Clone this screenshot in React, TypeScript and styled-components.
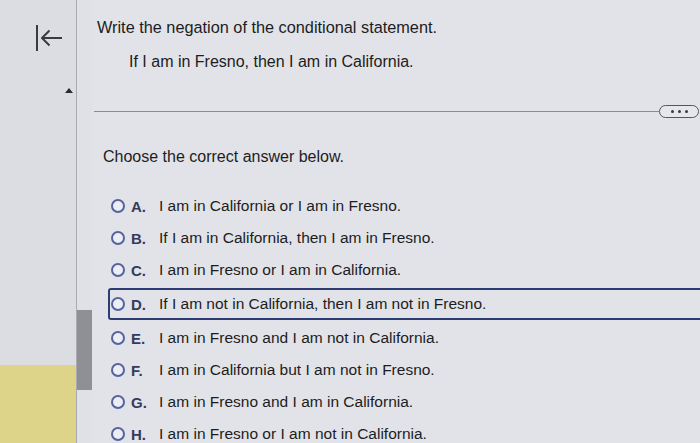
import styled, { createGlobalStyle } from "styled-components";

const GlobalStyle = createGlobalStyle`
  html, body {
    margin: 0;
    padding: 0;
    background: #e2e3e8;
    font-family: "Liberation Sans", Arial, sans-serif;
    color: #1c1d22;
  }
`;

const options = [
  { key: "A", text: "I am in California or I am in Fresno." },
  { key: "B", text: "If I am in California, then I am in Fresno." },
  { key: "C", text: "I am in Fresno or I am in California." },
  { key: "D", text: "If I am not in California, then I am not in Fresno." },
  { key: "E", text: "I am in Fresno and I am not in California." },
  { key: "F", text: "I am in California but I am not in Fresno." },
  { key: "G", text: "I am in Fresno and I am in California." },
  { key: "H", text: "I am in Fresno or I am not in California." },
];

const BackIcon = () => (
  <svg width="30" height="30" viewBox="0 0 30 30" fill="none">
    <path d="M2 1 V27" stroke="#3a3b40" strokeWidth="2" />
    <path d="M27 14 H7 M14.5 6.5 L7 14 L14.5 21.5" stroke="#3a3b40" strokeWidth="2" strokeLinejoin="round" />
  </svg>
);

export default function App() {
  return (
    <>
      <GlobalStyle />
      <Page>
        <Sidebar>
          <IconBox>
            <BackIcon />
          </IconBox>
          <ScrollUp />
          <Spacer />
          <YellowPatch />
        </Sidebar>
        <Track>
          <Thumb />
        </Track>
        <Main>
          <Title>Write the negation of the conditional statement.</Title>
          <Statement>If I am in Fresno, then I am in California.</Statement>
          <DividerRow>
            <Line />
            <MoreButton>
              <Dot />
              <Dot />
              <Dot />
            </MoreButton>
          </DividerRow>
          <Prompt>Choose the correct answer below.</Prompt>
          <OptionList>
            {options.map((o) => (
              <Option key={o.key} $selected={o.key === "D"}>
                <Radio />
                <Letter>{o.key}.</Letter>
                <OptionText>{o.text}</OptionText>
              </Option>
            ))}
          </OptionList>
        </Main>
      </Page>
    </>
  );
}

const Page = styled.div`
  display: flex;
  width: 700px;
  height: 443px;
  overflow: hidden;
`;

const Sidebar = styled.div`
  width: 76px;
  display: flex;
  flex-direction: column;
  background: #dcdde2;
  border-right: 1px solid #a8aaaf;
`;

const IconBox = styled.div`
  padding: 24px 0 0 35px;
  height: 30px;
`;

const ScrollUp = styled.div`
  align-self: flex-end;
  margin: 34px 3px 0 0;
  width: 0;
  height: 0;
  border-left: 4px solid transparent;
  border-right: 4px solid transparent;
  border-bottom: 5px solid #2b2c30;
`;

const Spacer = styled.div`
  flex: 1;
`;

const YellowPatch = styled.div`
  height: 78px;
  background: #ddd48a;
`;

const Track = styled.div`
  width: 15px;
  background: #e0e1e6;
`;

const Thumb = styled.div`
  margin-top: 310px;
  height: 80px;
  background: #8e9094;
`;

const Main = styled.div`
  flex: 1;
  display: flex;
  flex-direction: column;
  padding-left: 5px;
  min-width: 0;
`;

const Title = styled.div`
  margin-top: 17px;
  font-size: 16.3px;
  line-height: 20px;
`;

const Statement = styled.div`
  margin-top: 15px;
  padding-left: 32px;
  font-size: 16px;
  line-height: 20px;
`;

const DividerRow = styled.div`
  margin: 33px 1px 0 -3px;
  display: flex;
  align-items: center;
  height: 13px;
`;

const Line = styled.div`
  flex: 1;
  height: 1px;
  background: #8a8b90;
`;

const MoreButton = styled.div`
  width: 38px;
  height: 11px;
  border: 1px solid #55565b;
  border-radius: 7px;
  display: flex;
  align-items: center;
  justify-content: center;
  gap: 4px;
  background: #e6e7ec;
`;

const Dot = styled.span`
  width: 3px;
  height: 3px;
  border-radius: 50%;
  background: #3a3b40;
`;

const Prompt = styled.div`
  margin-top: 29px;
  padding-left: 6px;
  font-size: 16px;
  line-height: 20px;
`;

const OptionList = styled.div`
  margin: 23px -10px 0 11px;
  display: flex;
  flex-direction: column;
`;

const Option = styled.div<{ $selected?: boolean }>`
  box-sizing: border-box;
  height: 32px;
  margin: ${(p) => (p.$selected ? "2px 0" : "0")};
  display: flex;
  align-items: center;
  padding-left: 1px;
  border: 2px solid ${(p) => (p.$selected ? "#2e3c74" : "transparent")};
  border-radius: 3px;
`;

const Radio = styled.span`
  box-sizing: border-box;
  width: 14px;
  height: 14px;
  border-radius: 50%;
  border: 2px solid #5563a0;
  background: #eceef3;
  flex-shrink: 0;
`;

const Letter = styled.span`
  width: 28px;
  margin-left: 6px;
  font-size: 15px;
  font-weight: bold;
  color: #333b5e;
`;

const OptionText = styled.span`
  font-size: 15.5px;
  white-space: nowrap;
`;
